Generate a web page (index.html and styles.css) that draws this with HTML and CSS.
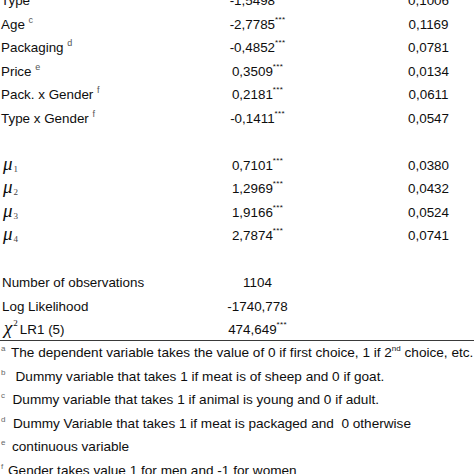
FILE: index.html
```html
<!DOCTYPE html>
<html>
<head>
<meta charset="utf-8">
<link rel="stylesheet" href="styles.css">
</head>
<body>
<div class="table">
  <div class="row"><div class="lbl">Type <span class="note">b</span></div><div class="coef">-1,5498<span class="stars">***</span></div><div class="se">0,1006</div></div>
  <div class="row"><div class="lbl">Age <span class="note">c</span></div><div class="coef">-2,7785<span class="stars">***</span></div><div class="se">0,1169</div></div>
  <div class="row"><div class="lbl">Packaging <span class="note">d</span></div><div class="coef">-0,4852<span class="stars">***</span></div><div class="se">0,0781</div></div>
  <div class="row"><div class="lbl">Price <span class="note">e</span></div><div class="coef">0,3509<span class="stars">***</span></div><div class="se">0,0134</div></div>
  <div class="row"><div class="lbl">Pack. x Gender <span class="note">f</span></div><div class="coef">0,2181<span class="stars">***</span></div><div class="se">0,0611</div></div>
  <div class="row"><div class="lbl">Type x Gender <span class="note">f</span></div><div class="coef">-0,1411<span class="stars">***</span></div><div class="se">0,0547</div></div>
  <div class="row"></div>
  <div class="row"><div class="lbl"><span class="greek">μ</span><span class="idx">1</span></div><div class="coef">0,7101<span class="stars">***</span></div><div class="se">0,0380</div></div>
  <div class="row"><div class="lbl"><span class="greek">μ</span><span class="idx">2</span></div><div class="coef">1,2969<span class="stars">***</span></div><div class="se">0,0432</div></div>
  <div class="row"><div class="lbl"><span class="greek">μ</span><span class="idx">3</span></div><div class="coef">1,9166<span class="stars">***</span></div><div class="se">0,0524</div></div>
  <div class="row"><div class="lbl"><span class="greek">μ</span><span class="idx">4</span></div><div class="coef">2,7874<span class="stars">***</span></div><div class="se">0,0741</div></div>
  <div class="row"></div>
  <div class="row"><div class="lbl lbl-wide">Number of observations</div><div class="coef">1104</div><div class="se"></div></div>
  <div class="row"><div class="lbl lbl-wide">Log Likelihood</div><div class="coef">-1740,778</div><div class="se"></div></div>
  <div class="row row-last"><div class="lbl"><span class="greek chi">χ</span><span class="sq">2</span><span class="lr">LR1 (5)</span></div><div class="coef">474,649<span class="stars">***</span></div><div class="se"></div></div>
</div>
<div class="notes">
  <div class="fn"><span class="mark">a</span><span class="txt ind-a">The dependent variable takes the value of 0 if first choice, 1 if 2<span class="nd">nd</span> choice, etc.</span></div>
  <div class="fn"><span class="mark">b</span><span class="txt ind-b">Dummy variable that takes 1 if meat is of sheep and 0 if goat.</span></div>
  <div class="fn"><span class="mark">c</span><span class="txt ind-c">Dummy variable that takes 1 if animal is young and 0 if adult.</span></div>
  <div class="fn"><span class="mark">d</span><span class="txt ind-d">Dummy Variable that takes 1 if meat is packaged and&nbsp; 0 otherwise</span></div>
  <div class="fn"><span class="mark">e</span><span class="txt ind-e">continuous variable</span></div>
  <div class="fn"><span class="mark">f</span><span class="txt ind-f">Gender takes value 1 for men and -1 for women</span></div>
</div>
</body>
</html>
```
FILE: styles.css
```css
html, body {
  margin: 0;
  padding: 0;
  background: #ffffff;
}
body {
  width: 474px;
  height: 474px;
  overflow: hidden;
  font-family: "Liberation Sans", Arial, sans-serif;
  font-size: 13.4px;
  color: #0e0e0e;
}
.table {
  margin-top: -11px;
}
.row {
  display: grid;
  grid-template-columns: 200px 115px 1fr;
  height: 23.5px;
  line-height: 23.5px;
  white-space: nowrap;
}
.row-last {
  height: 22px;
  border-bottom: 1px solid #3a3a3a;
}
.lbl {
  padding-left: 1px;
}
.lbl-wide {
  padding-left: 2px;
}
.coef {
  text-align: center;
}
.se {
  padding-left: 68px;
  text-align: center;
}
.note {
  font-size: 9px;
  line-height: 0;
  vertical-align: 6px;
  color: #555;
}
.stars {
  font-size: 8px;
  line-height: 0;
  vertical-align: 7px;
  letter-spacing: 0.3px;
}
.greek {
  font-family: "Liberation Serif", "Times New Roman", serif;
  font-style: italic;
  font-size: 19px;
  line-height: 0;
  padding-left: 2px;
}
.idx {
  font-family: "Liberation Serif", "Times New Roman", serif;
  font-size: 9px;
  line-height: 0;
  vertical-align: -2px;
  color: #444;
  margin-left: 1px;
}
.chi {
  padding-left: 3px;
}
.sq {
  font-family: "Liberation Serif", "Times New Roman", serif;
  font-size: 9px;
  line-height: 0;
  vertical-align: 8px;
  margin-left: 1px;
}
.lr {
  margin-left: 2px;
}
.notes {
  font-size: 13.6px;
}
.fn {
  height: 23.5px;
  line-height: 23.5px;
  white-space: nowrap;
}
.mark {
  display: inline-block;
  width: 8px;
  padding-left: 1px;
  font-size: 8px;
  line-height: 0;
  vertical-align: 6px;
  color: #666;
}
.ind-a { margin-left: 2px; }
.ind-b { margin-left: 6.5px; }
.ind-c { margin-left: 3.5px; }
.ind-d { margin-left: 4px; }
.ind-e { margin-left: 3px; }
.ind-f { margin-left: -1px; }
.nd {
  font-size: 8px;
  line-height: 0;
  vertical-align: 6px;
}
```
